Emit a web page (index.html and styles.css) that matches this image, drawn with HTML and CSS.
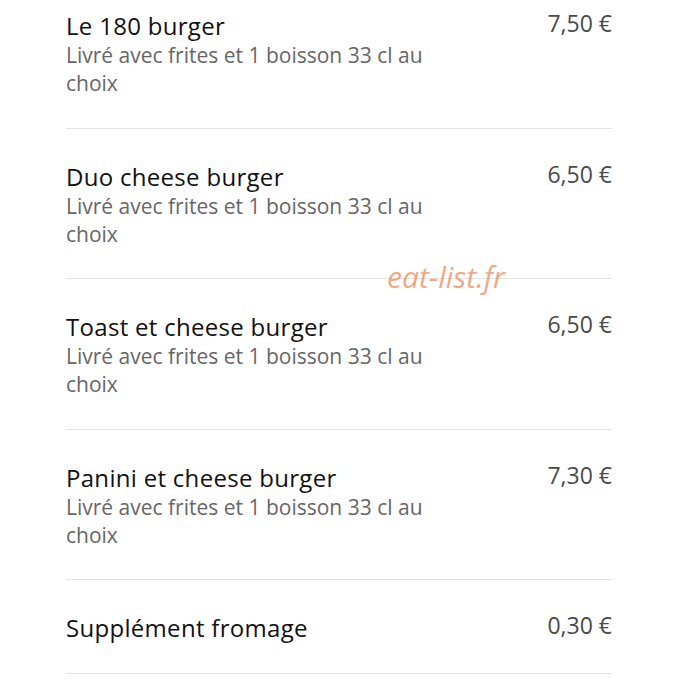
FILE: index.html
```html
<!DOCTYPE html>
<html lang="fr">
<head>
<meta charset="utf-8">
<link rel="stylesheet" href="styles.css">
</head>
<body>
<div class="menu">
  <div class="item">
    <div class="info">
      <div class="name">Le 180 burger</div>
      <div class="desc">Livré avec frites et 1 boisson 33 cl au choix</div>
    </div>
    <div class="price">7,50 €</div>
  </div>
  <div class="item">
    <div class="info">
      <div class="name">Duo cheese burger</div>
      <div class="desc">Livré avec frites et 1 boisson 33 cl au choix</div>
    </div>
    <div class="price">6,50 €</div>
  </div>
  <div class="item">
    <div class="info">
      <div class="name">Toast et cheese burger</div>
      <div class="desc">Livré avec frites et 1 boisson 33 cl au choix</div>
    </div>
    <div class="price">6,50 €</div>
  </div>
  <div class="item">
    <div class="info">
      <div class="name">Panini et cheese burger</div>
      <div class="desc">Livré avec frites et 1 boisson 33 cl au choix</div>
    </div>
    <div class="price">7,30 €</div>
  </div>
  <div class="item item-last">
    <div class="info">
      <div class="name">Supplément fromage</div>
    </div>
    <div class="price">0,30 €</div>
  </div>
  <div class="watermark">eat-list.fr</div>
</div>
</body>
</html>
```
FILE: styles.css
```css
html, body {
  margin: 0;
  padding: 0;
  background: #fff;
}
body {
  font-family: "Open Sans", "Liberation Sans", sans-serif;
}
.menu {
  position: relative;
  width: 546px;
  margin: -21px 0 0 66px;
}
.item {
  display: flex;
  justify-content: space-between;
  align-items: flex-start;
  padding: 33px 0 30.6px;
  border-bottom: 1px solid #e4e4e4;
}
.item:first-child {
  padding-top: 32px;
}
.item-last {
  padding-bottom: 29.6px;
}
.info {
  width: 372px;
}
.name {
  font-size: 24px;
  line-height: 30px;
  letter-spacing: 0.3px;
  color: #111;
}
.desc {
  font-size: 21px;
  line-height: 28px;
  color: #666;
}
.price {
  font-size: 23px;
  line-height: 30px;
  color: #4a4a4a;
  margin-top: -3px;
}
.watermark {
  position: absolute;
  left: 321px;
  top: 277px;
  font-size: 30px;
  font-style: italic;
  color: rgba(236, 140, 90, 0.75);
}
```
